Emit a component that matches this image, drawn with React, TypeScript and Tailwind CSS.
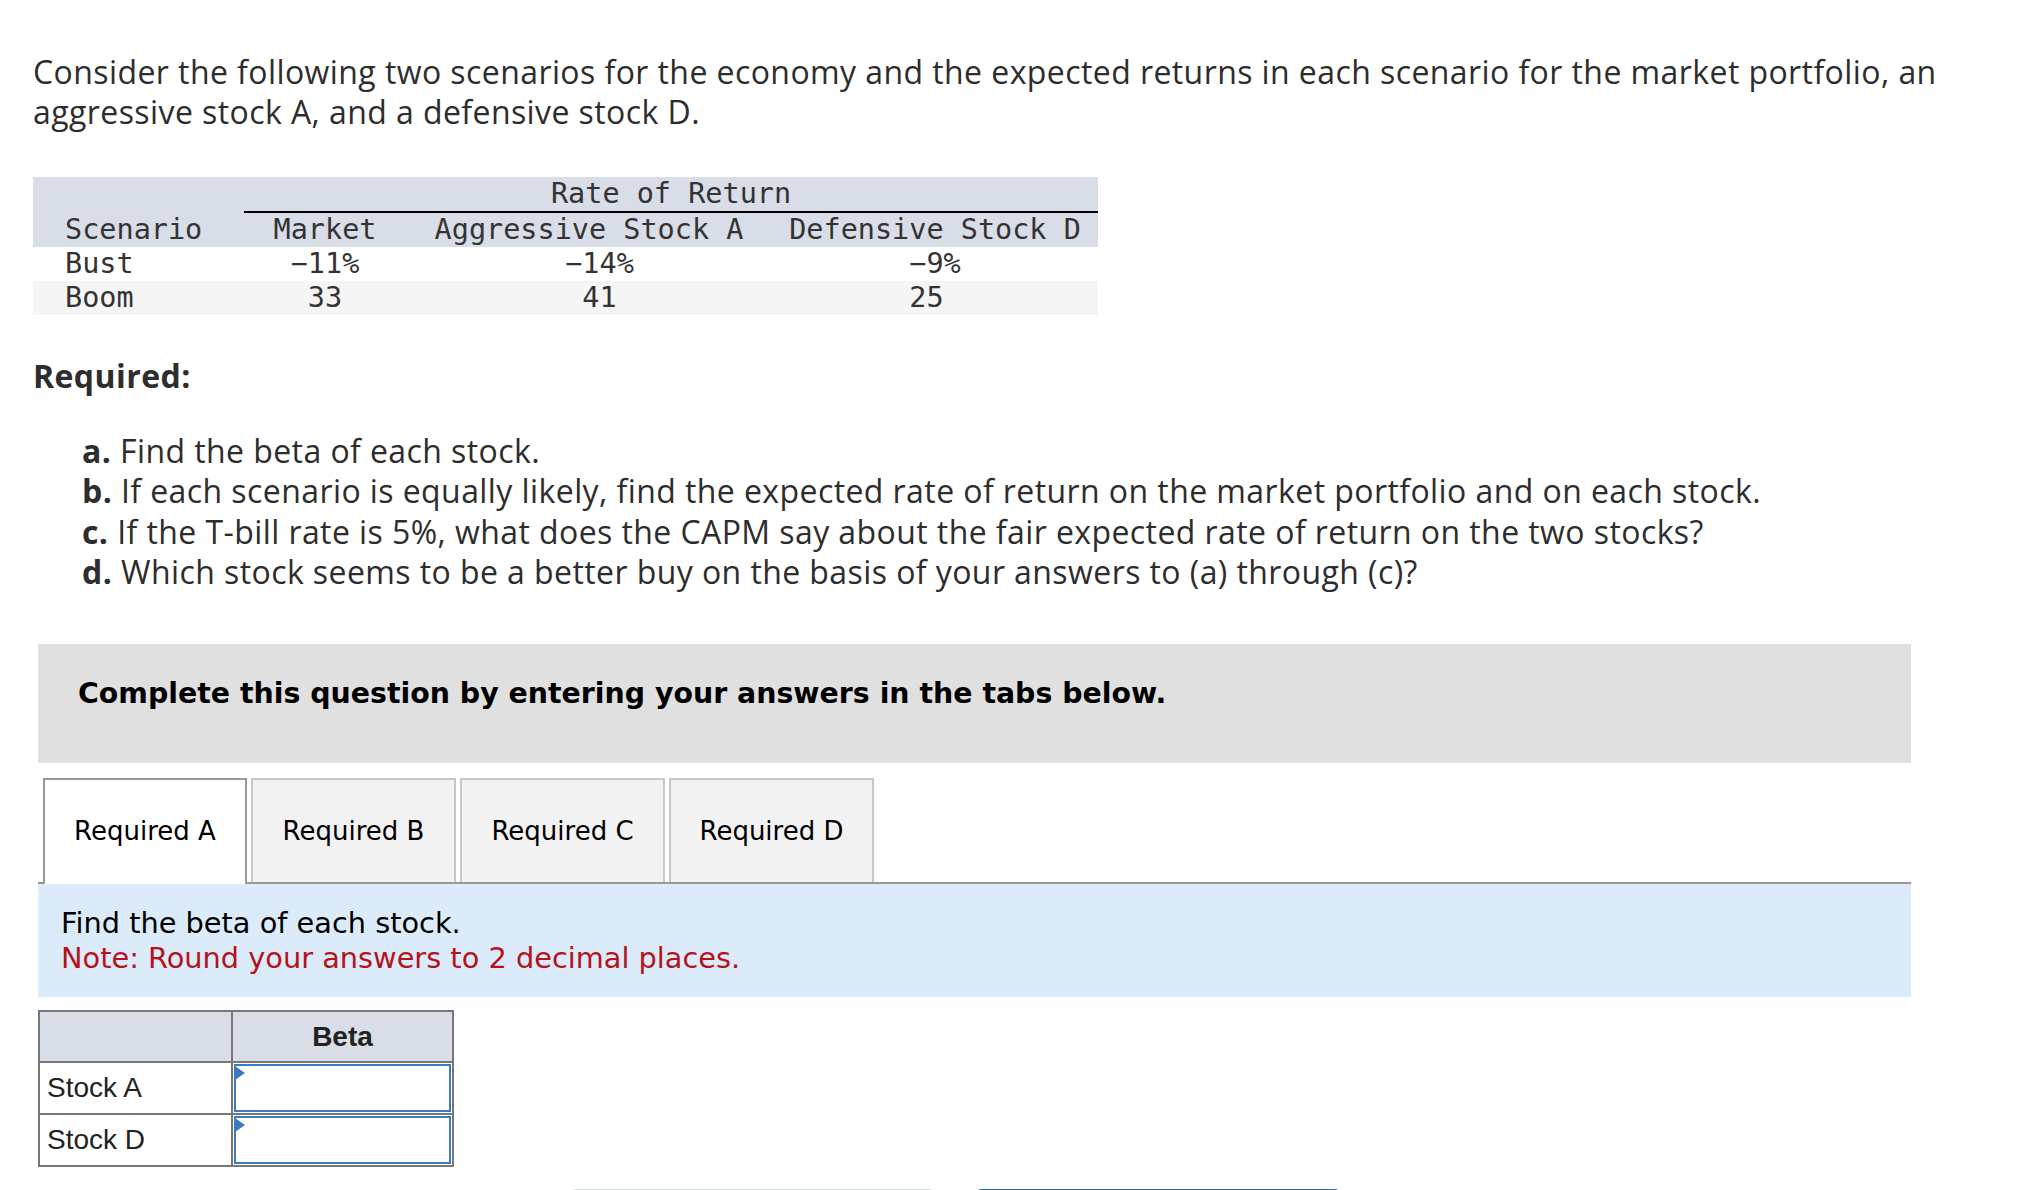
import React from "react";

const sans = { fontFamily: "'Open Sans', Lato, sans-serif" };

function RatesTable() {
  const rows = [
    { name: "Bust", market: "−11%", agg: "−14%", def: "−9%", bg: "bg-white" },
    { name: "Boom", market: "33", agg: "41", def: "25\u00a0", bg: "bg-[#f5f5f5]" },
  ];
  return (
    <table className="mt-[45px] w-[1065px] table-fixed border-collapse font-['DejaVu_Sans_Mono',monospace] text-[28.5px] leading-[34px] text-[#333]">
      <colgroup>
        <col className="w-[211px]" />
        <col className="w-[162px]" />
        <col className="w-[366px]" />
        <col className="w-[326px]" />
      </colgroup>
      <thead>
        <tr className="h-[34px] bg-[#d9dde7]">
          <th className="p-0" />
          <th colSpan={3} className="border-b-2 border-black p-0 text-center font-normal">
            Rate of Return
          </th>
        </tr>
        <tr className="h-[33px] bg-[#d9dde7]">
          <th className="p-0 pl-[32px] text-left font-normal">Scenario</th>
          <th className="p-0 text-center font-normal">Market</th>
          <th className="p-0 text-center font-normal">Aggressive Stock A</th>
          <th className="p-0 text-center font-normal">Defensive Stock D</th>
        </tr>
      </thead>
      <tbody>
        {rows.map((r) => (
          <tr key={r.name} className={`h-[34px] ${r.bg}`}>
            <td className="p-0 pl-[32px]">{r.name}</td>
            <td className="whitespace-pre p-0 text-center">{r.market}</td>
            <td className="whitespace-pre p-0 pl-[21px] text-center">{r.agg}</td>
            <td className="whitespace-pre p-0 text-center">{r.def}</td>
          </tr>
        ))}
      </tbody>
    </table>
  );
}

function AnswerInput() {
  return (
    <td className="relative border-2 border-[#777] p-0">
      <div className="m-[1px] h-[48px] border-2 border-[#3b7bc4] bg-white" />
      <span className="absolute left-[2px] top-[3px] h-0 w-0 border-y-[7px] border-l-[10px] border-y-transparent border-l-[#3b7bc4]" />
    </td>
  );
}

export default function App() {
  const tabs = ["Required A", "Required B", "Required C", "Required D"];
  return (
    <div className="min-h-[1190px] overflow-hidden bg-white pl-[33px] pt-[52px] text-[#2d2d2d]">
      <div className="w-[1878px]">
        <p style={sans} className="whitespace-nowrap text-[32px] leading-[40px] tracking-[0.42px]">
          Consider the following two scenarios for the economy and the expected returns in each scenario for the market portfolio, an
          <br />
          aggressive stock A, and a defensive stock D.
        </p>

        <RatesTable />

        <p style={sans} className="mt-[41px] text-[32px] font-bold leading-[40px] tracking-[0.42px]">
          Required:
        </p>
        <ol style={sans} className="mt-[35px] pl-[49px] text-[32px] leading-[40.3px] tracking-[0.42px]">
          <li>
            <b>a.</b> Find the beta of each stock.
          </li>
          <li>
            <b>b.</b> If each scenario is equally likely, find the expected rate of return on the market portfolio and on each stock.
          </li>
          <li>
            <b>c.</b> If the T-bill rate is 5%, what does the CAPM say about the fair expected rate of return on the two stocks?
          </li>
          <li>
            <b>d.</b> Which stock seems to be a better buy on the basis of your answers to (a) through (c)?
          </li>
        </ol>

        <div className="ml-[5px] mt-[52px] h-[119px] bg-[#e0e0e0] pl-[40px] pt-[33px] font-['DejaVu_Sans',sans-serif] text-[28.4px] font-bold leading-[34px] text-black">
          Complete this question by entering your answers in the tabs below.
        </div>

        <div className="ml-[5px] mt-[15px] flex items-end gap-[4px] border-b-2 border-[#999] pl-[5px] font-['DejaVu_Sans',sans-serif] text-[26px] text-black">
          {tabs.map((t, i) =>
            i === 0 ? (
              <div
                key={t}
                className="-mb-[2px] flex h-[106px] w-[204px] items-center justify-center border-2 border-b-0 border-[#999] bg-white pb-[2px]"
              >
                {t}
              </div>
            ) : (
              <div
                key={t}
                className="flex h-[104px] w-[205px] items-center justify-center border-2 border-b-0 border-[#c8c8c8] bg-[#f2f2f2]"
              >
                {t}
              </div>
            )
          )}
        </div>

        <div className="ml-[5px] bg-[#dcebf9] px-[23px] pb-[21px] pt-[22px] font-['DejaVu_Sans',sans-serif] text-[28.8px] leading-[35px]">
          <p className="text-black">Find the beta of each stock.</p>
          <p className="text-[#b5121b]">Note: Round your answers to 2 decimal places.</p>
        </div>

        <table className="ml-[5px] mt-[13px] w-[414px] table-fixed border-collapse font-['Liberation_Sans',Arial,sans-serif] text-[28px] text-[#222]">
          <colgroup>
            <col className="w-[193px]" />
            <col className="w-[221px]" />
          </colgroup>
          <thead>
            <tr className="h-[51px] bg-[#d9dde7]">
              <th className="border-2 border-[#777] p-0" />
              <th className="border-2 border-[#777] p-0 text-center font-bold">Beta</th>
            </tr>
          </thead>
          <tbody>
            {["Stock A", "Stock D"].map((s) => (
              <tr key={s} className="h-[52px]">
                <td className="border-2 border-[#777] p-0 pl-[7px]">{s}</td>
                <AnswerInput />
              </tr>
            ))}
          </tbody>
        </table>

        <div className="mt-[22px] flex gap-[44px] pl-[539px]">
          <button aria-label="Previous" className="h-[56px] w-[361px] rounded-t-[4px] border-t-2 border-[#cfd8e3] bg-[#e3e9f0]" />
          <button aria-label="Next" className="h-[56px] w-[362px] rounded-t-[4px] bg-[#2f6db3]" />
        </div>
      </div>
    </div>
  );
}
